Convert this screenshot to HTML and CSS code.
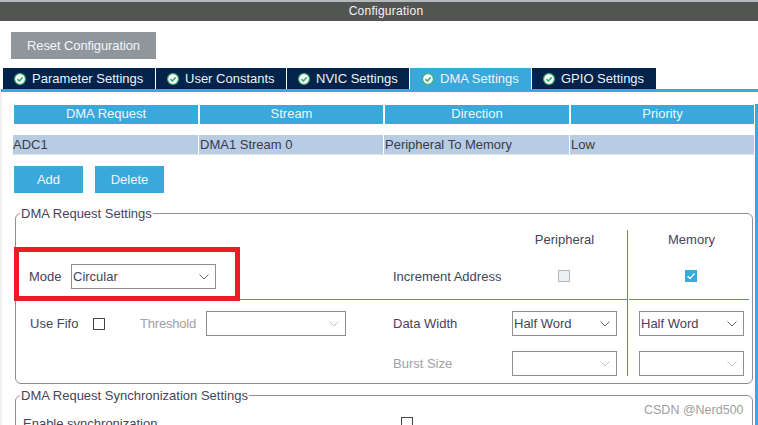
FILE: index.html
```html
<!DOCTYPE html>
<html lang="en">
<head>
    <meta charset="UTF-8">
    <title>Configuration</title>
    <link rel="stylesheet" href="styles.css">
</head>
<body>
    <div class="title_bar">Configuration</div>

    <div class="toolbar">
        <button class="btn btn_gray">Reset Configuration</button>
    </div>

    <div class="tabs">
        <div class="tab t1"><svg class="ok" viewBox="0 0 12 12"><circle cx="6" cy="6" r="5.4" fill="#fff" stroke="#3fae6f" stroke-width="1.2"/><path d="M3.4 6.1 5.3 8 8.7 4.4" fill="none" stroke="#3fae6f" stroke-width="1.6"/></svg>Parameter Settings</div>
        <div class="tab t2"><svg class="ok" viewBox="0 0 12 12"><circle cx="6" cy="6" r="5.4" fill="#fff" stroke="#3fae6f" stroke-width="1.2"/><path d="M3.4 6.1 5.3 8 8.7 4.4" fill="none" stroke="#3fae6f" stroke-width="1.6"/></svg>User Constants</div>
        <div class="tab t3"><svg class="ok" viewBox="0 0 12 12"><circle cx="6" cy="6" r="5.4" fill="#fff" stroke="#3fae6f" stroke-width="1.2"/><path d="M3.4 6.1 5.3 8 8.7 4.4" fill="none" stroke="#3fae6f" stroke-width="1.6"/></svg>NVIC Settings</div>
        <div class="tab t4 active"><svg class="ok" viewBox="0 0 12 12"><circle cx="6" cy="6" r="5.4" fill="#fff" stroke="#3fae6f" stroke-width="1.2"/><path d="M3.4 6.1 5.3 8 8.7 4.4" fill="none" stroke="#3fae6f" stroke-width="1.6"/></svg>DMA Settings</div>
        <div class="tab t5"><svg class="ok" viewBox="0 0 12 12"><circle cx="6" cy="6" r="5.4" fill="#fff" stroke="#3fae6f" stroke-width="1.2"/><path d="M3.4 6.1 5.3 8 8.7 4.4" fill="none" stroke="#3fae6f" stroke-width="1.6"/></svg>GPIO Settings</div>
    </div>

    <div class="panel">
        <div class="scroll_bar"></div>

        <div class="table_head">
            <div>DMA Request</div>
            <div>Stream</div>
            <div>Direction</div>
            <div>Priority</div>
        </div>
        <div class="table_row">
            <div>ADC1</div>
            <div>DMA1 Stream 0</div>
            <div>Peripheral To Memory</div>
            <div>Low</div>
        </div>

        <div class="actions">
            <button class="btn btn_blue">Add</button>
            <button class="btn btn_blue">Delete</button>
        </div>

        <fieldset class="group">
            <legend>DMA Request Settings</legend>
            <div class="dma_grid">
                <div class="head head_p">Peripheral</div>
                <div class="head head_m">Memory</div>

                <div class="cell_left mode_row">
                    <span class="lbl lbl_mode">Mode</span>
                    <div class="drop drop_mode">Circular<svg viewBox="0 0 10 6"><path d="M.5 .5 5 5 9.500 .5" fill="none" stroke="#666"/></svg></div>
                </div>
                <div class="lbl">Increment Address</div>
                <div class="check_cell"><span class="check check_off"></span></div>
                <div class="check_cell col_mem"><span class="check check_on"><svg viewBox="0 0 12 12"><path d="M2.6 6.2 5 8.6 9.600 3.400" fill="none" stroke="#fff" stroke-width="1.400"/></svg></span></div>

                <div class="hline"></div>

                <div class="cell_left fifo_row">
                    <span class="lbl lbl_fifo">Use Fifo</span>
                    <span class="box"></span>
                    <span class="lbl off lbl_thr">Threshold</span>
                    <div class="drop drop_thr"><svg viewBox="0 0 10 6"><path d="M.5 .5 5 5 9.500 .5" fill="none" stroke="#c4c4c4"/></svg></div>
                </div>
                <div class="lbl">Data Width</div>
                <div class="drop">Half Word<svg viewBox="0 0 10 6"><path d="M.5 .5 5 5 9.500 .5" fill="none" stroke="#666"/></svg></div>
                <div class="drop col_mem">Half Word<svg viewBox="0 0 10 6"><path d="M.5 .5 5 5 9.500 .5" fill="none" stroke="#666"/></svg></div>

                <div class="cell_left"></div>
                <div class="lbl off">Burst Size</div>
                <div class="drop"><svg viewBox="0 0 10 6"><path d="M.5 .5 5 5 9.500 .5" fill="none" stroke="#c4c4c4"/></svg></div>
                <div class="drop col_mem"><svg viewBox="0 0 10 6"><path d="M.5 .5 5 5 9.500 .5" fill="none" stroke="#c4c4c4"/></svg></div>

                <div class="vline"></div>
            </div>
        </fieldset>

        <fieldset class="group group_sync">
            <legend>DMA Request Synchronization Settings</legend>
            <div class="sync_row">
                <span class="lbl lbl_sync">Enable synchronization</span>
                <span class="box"></span>
            </div>
        </fieldset>
    </div>

    <div class="red_box"></div>
    <div class="mark">CSDN @Nerd500</div>
</body>
</html>
```

FILE: styles.css
```css
* {
    box-sizing: border-box;
}
html, body {
    height: 100%;
}
body {
    margin: 0;
    background: #fff;
    font-family: "Liberation Sans", Arial, sans-serif;
    font-size: 13px;
    color: #44445a;
    overflow: hidden;
    position: relative;
}
.title_bar {
    height: 21px;
    border-top: 2px solid #b4b9bb;
    background: #535553;
    color: #f4f4f4;
    font-size: 12px;
    letter-spacing: 0.25px;
    text-align: center;
    line-height: 19px;
    padding-left: 14px;
}
.toolbar {
    padding: 11px 0 0 11px;
    height: 47px;
}
.btn {
    border: 0;
    height: 27px;
    color: #f2f6f8;
    font-family: inherit;
    font-size: 13px;
    padding: 0;
}
.btn_gray {
    width: 145px;
    background: #8f969c;
    letter-spacing: -0.1px;
}
.btn_blue {
    width: 69px;
    background: #39a9dc;
}
.tabs {
    display: flex;
    gap: 1px;
    height: 24px;
    margin-left: 1px;
    padding-left: 2px;
    border-bottom: 3px solid #39a9dc;
}
.tab {
    height: 21px;
    background: #03234b;
    color: #eef2f5;
    display: flex;
    align-items: center;
    padding-left: 11px;
    gap: 6px;
}
.tab.active {
    background: #39a9dc;
    padding-left: 12px;
}
.t1 { width: 152px; }
.t2 { width: 130px; }
.t3 { width: 122px; }
.t4 { width: 121px; }
.t5 { width: 124px; }
.ok {
    width: 12px;
    height: 12px;
    flex: none;
}
.panel {
    position: relative;
    border-left: 2px solid #f0f0f0;
    height: 333px;
    padding: 13px 0 0 11px;
}
.scroll_bar {
    position: absolute;
    right: 0;
    top: 12px;
    bottom: 0;
    width: 3px;
    background: #39a9dc;
}
.table_head, .table_row {
    display: grid;
    grid-template-columns: 184px 183px 184px 183px;
    gap: 2px;
    margin-left: 1px;
}
.table_head div {
    height: 19px;
    line-height: 18px;
    background: #39a9dc;
    color: #eef6fb;
    text-align: center;
}
.table_row {
    margin: 11px 0 0;
    grid-template-columns: 185px 184px 185px 184px;
    gap: 1px;
    border-bottom: 1px solid #e2e2e2;
    width: 741px;
    height: 20px;
}
.table_row div {
    background: #b8cce4;
    height: 19px;
    line-height: 19px;
    color: #3a3a4a;
}
.table_row div + div {
    padding-left: 1px;
}
.actions {
    display: flex;
    gap: 12px;
    margin: 11px 0 0 1px;
    height: 27px;
}
.group {
    margin: 13px 0 0 2px;
    padding: 0;
    width: 738px;
    height: 178px;
    border: 1px solid #8f8f8f;
    border-radius: 6px;
}
.group legend {
    margin-left: 4px;
    padding: 0 1px;
}
.group_sync {
    margin-top: 4px;
    height: 60px;
}
.dma_grid {
    display: grid;
    grid-template-columns: 377px 119px 105px 22px 105px;
    grid-template-rows: 34px 35px 12px 40px 25px;
    margin-top: 9px;
    align-items: start;
}
.head {
    text-align: center;
    line-height: 20px;
}
.head_p { grid-column: 3; }
.head_m { grid-column: 5; }
.cell_left {
    grid-column: 1;
    display: flex;
    align-items: center;
}
.mode_row {
    padding-left: 13px;
}
.fifo_row {
    padding-left: 14px;
}
.lbl {
    line-height: 25px;
}
.lbl_mode {
    width: 42px;
}
.lbl_fifo {
    width: 63px;
}
.lbl_thr {
    margin-left: 35px;
    width: 66px;
    letter-spacing: -0.2px;
}
.off {
    color: #a0a0a8;
}
.drop {
    height: 25px;
    border: 1px solid #8f8f8f;
    padding: 0 6px 0 1px;
    display: flex;
    align-items: center;
    background: #fff;
}
.drop svg {
    width: 10px;
    height: 6px;
    flex: none;
    margin-left: auto;
}
.drop_mode {
    width: 145px;
}
.drop_thr {
    width: 140px;
}
.col_mem {
    grid-column: 5;
}
.check_cell {
    display: flex;
    justify-content: center;
    padding: 6px 1px 0 0;
}
.check {
    width: 12px;
    height: 12px;
    display: block;
}
.check_off {
    background: #eef0f3;
    border: 1px solid #b5b5b5;
}
.check_on {
    background: #39a9dc;
}
.check_on svg {
    display: block;
}
.box {
    width: 12px;
    height: 12px;
    border: 1px solid #444;
    flex: none;
}
.hline {
    grid-column: 1 / -1;
    grid-row: 3;
    height: 1px;
    background: #6a86b8;
    width: 733px;
}
.vline {
    grid-column: 4;
    grid-row: 1 / -1;
    justify-self: center;
    width: 2px;
    height: 146px;
    border-left: 1px solid #6a86b8;
    border-right: 1px solid #fff;
}
.sync_row {
    display: flex;
    padding: 13px 0 0 7px;
}
.lbl_sync {
    width: 378px;
    line-height: 15px;
}
.sync_row .box {
    margin-top: 1px;
}
.red_box {
    position: absolute;
    left: 14px;
    top: 247px;
    width: 226px;
    height: 54px;
    border: 5px solid #ed1c24;
}
.mark {
    position: absolute;
    left: 644px;
    top: 403px;
    font-size: 12.5px;
    color: #a0a0a0;
}
```
